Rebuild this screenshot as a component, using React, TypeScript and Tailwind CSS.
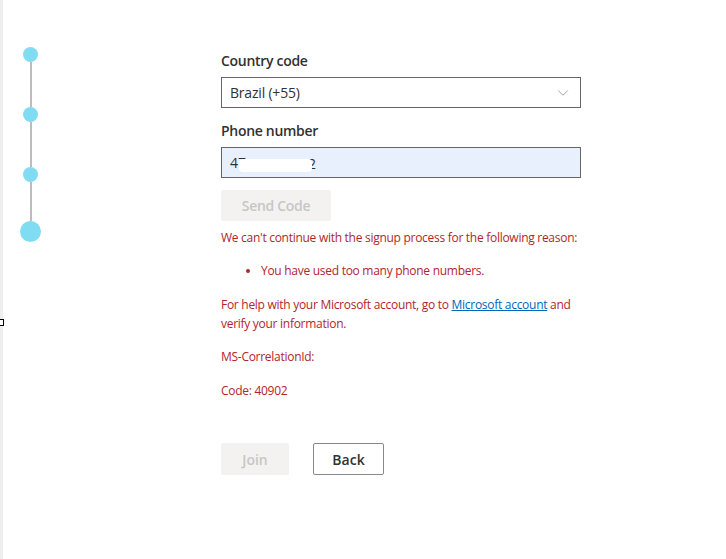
import { ChevronDown } from 'lucide-react';

const steps = [
    { size: 'w-[15px] h-[15px]', line: 'h-[45px]' },
    { size: 'w-[15px] h-[15px]', line: 'h-[45px]' },
    { size: 'w-[15px] h-[15px]', line: 'h-[39px]' },
    { size: 'w-[21px] h-[21px]', line: '' },
];

function Timeline() {
    return (
        <div className="flex w-[55px] flex-col items-center pt-[47px]">
            {steps.map((s, i) => (
                <div key={i} className="flex flex-col items-center">
                    <div className={`${s.size} rounded-full bg-[#80ddf1]`} />
                    {s.line && <div className={`${s.line} w-[2px] bg-[#bdbdbd]`} />}
                </div>
            ))}
        </div>
    );
}

export default function App() {
    return (
        <div className="relative flex h-[559px] w-[726px] overflow-hidden bg-white font-['Segoe_UI','Open_Sans',sans-serif] text-[#323130]">
            {/* left edge strip */}
            <div className="w-[3px] bg-[#eeeeee]" />
            <div className="absolute left-[-3px] top-[319px] h-[7px] w-[7px] border border-black bg-white" />

            <Timeline />

            {/* Form */}
            <div className="ml-[163px] flex w-[360px] flex-col pt-[51px]">
                <label className="h-[20px] text-[14px] font-semibold leading-[20px] tracking-[-0.3px]">Country code</label>
                <div className="mt-[6px] flex h-[31px] items-center justify-between border border-[#666666] pl-[8px] pr-[8px] text-[14px] tracking-[-0.2px]">
                    <span>Brazil (+55)</span>
                    <ChevronDown className="h-[18px] w-[18px] text-[#8a8886]" strokeWidth={1} />
                </div>

                <label className="mt-[13px] h-[20px] text-[14px] font-semibold leading-[20px] tracking-[-0.3px]">Phone number</label>
                <div className="relative mt-[6px] flex h-[31px] items-center border border-[#666666] bg-[#e8f0fe] pl-[8px] text-[14px]">
                    <span>47</span>
                    <span className="absolute left-[86px] top-[5px]">2</span>
                    <div className="absolute left-[17px] top-[11px] h-[13px] w-[73px] rounded-[4px] bg-white" />
                </div>

                <button className="mt-[12px] h-[31px] w-[110px] rounded-[2px] bg-[#f3f2f1] text-[14px] font-semibold tracking-[-0.3px] text-[#c8c6c4]">
                    Send Code
                </button>

                <div className="text-[12px] leading-[19px] tracking-[-0.28px] text-[#b1262c]">
                    <p className="mt-[7px]">We can't continue with the signup process for the following reason:</p>
                    <ul className="mt-[14px] list-disc pl-[40px]">
                        <li>You have used too many phone numbers.</li>
                    </ul>
                    <p className="mt-[15px]">
                        For help with your Microsoft account, go to <a className="text-[#0067b8] underline">Microsoft account</a> and
                        verify your information.
                    </p>
                    <p className="mt-[14px]">MS-CorrelationId:</p>
                    <p className="mt-[15px]">Code: 40902</p>
                </div>

                <div className="mt-[43px] flex gap-[24px]">
                    <button className="h-[32px] w-[68px] rounded-[2px] bg-[#f3f2f1] text-[14px] font-semibold text-[#c8c6c4]">
                        Join
                    </button>
                    <button className="h-[32px] w-[71px] rounded-[2px] border border-[#8a8886] bg-white text-[14px] font-semibold text-[#323130]">
                        Back
                    </button>
                </div>
            </div>
        </div>
    );
}
